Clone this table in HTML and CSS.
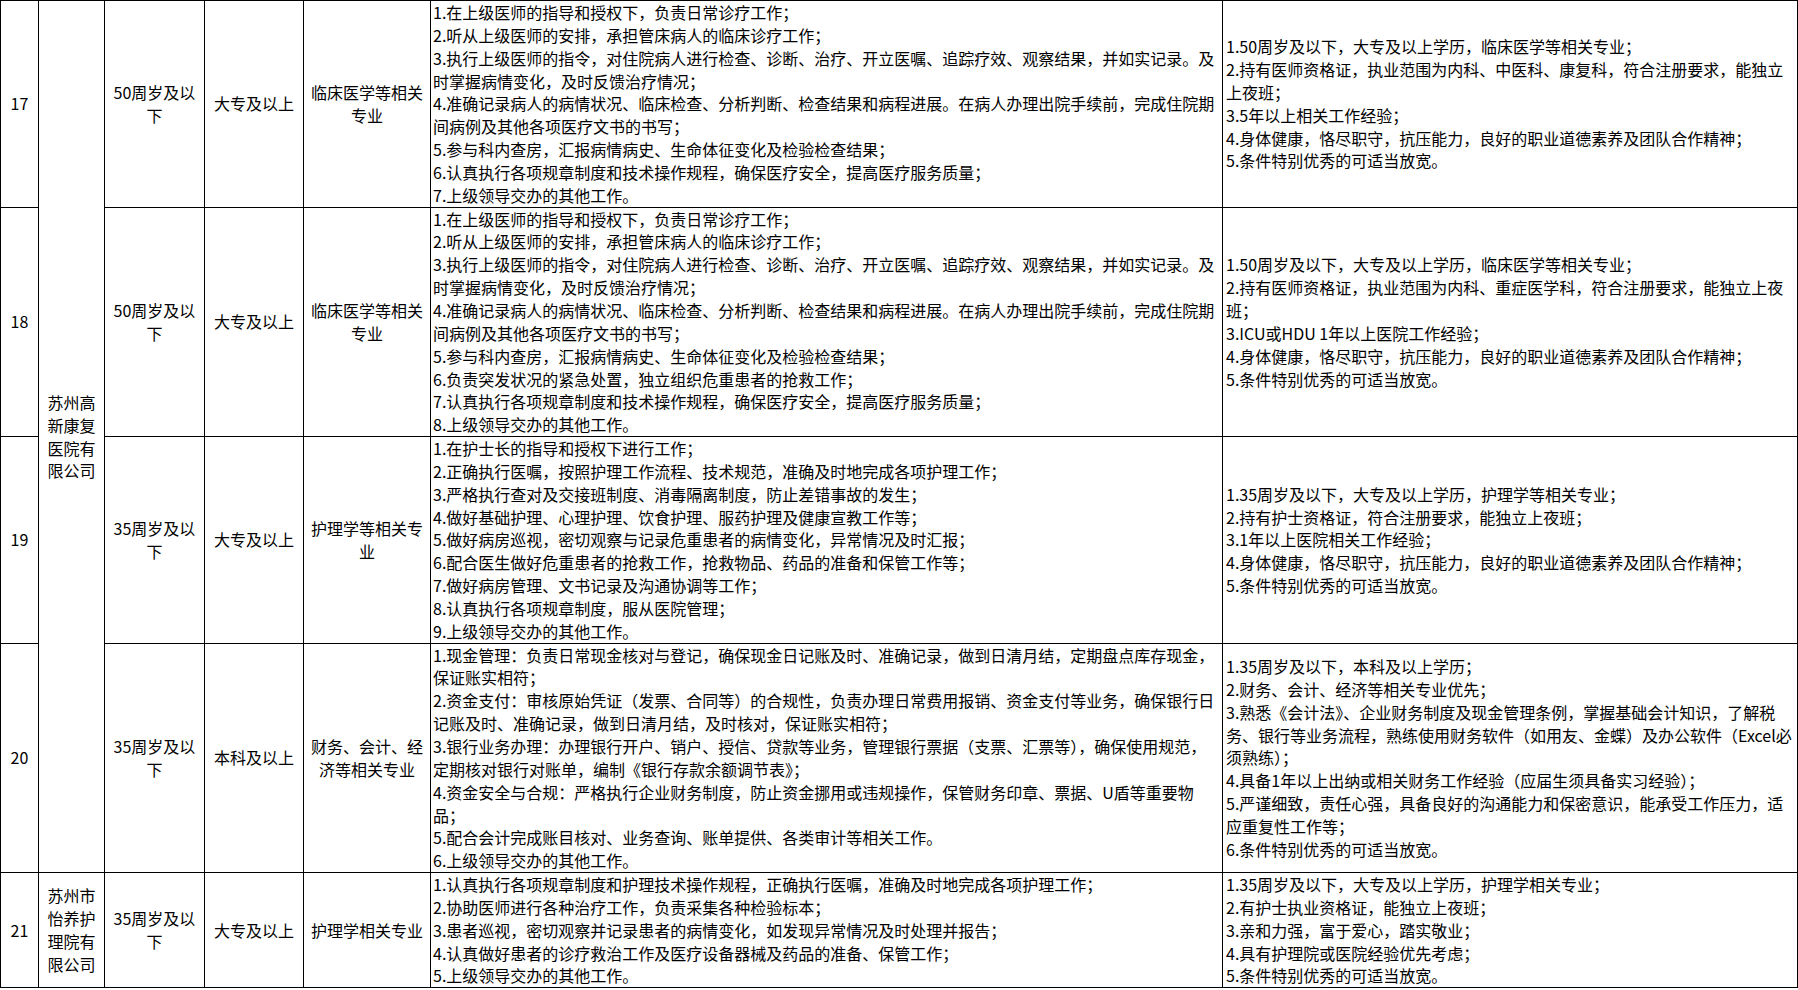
FILE: index.html
```html
<!DOCTYPE html>
<html lang="zh-CN">
<head>
<meta charset="utf-8">
<title>招聘岗位</title>
<link rel="stylesheet" href="styles.css">
</head>
<body>
<table class="jobs">
  <colgroup>
    <col class="c-no"><col class="c-co"><col class="c-age"><col class="c-edu"><col class="c-major"><col class="c-duty"><col class="c-req">
  </colgroup>
  <tbody>
    <tr>
      <td class="no">17</td>
      <td class="co" rowspan="4">苏州高新康复医院有限公司</td>
      <td class="mid">50周岁及以下</td>
      <td class="mid">大专及以上</td>
      <td class="mid">临床医学等相关专业</td>
      <td class="duty">
        <p>1.在上级医师的指导和授权下，负责日常诊疗工作；</p>
        <p>2.听从上级医师的安排，承担管床病人的临床诊疗工作；</p>
        <p>3.执行上级医师的指令，对住院病人进行检查、诊断、治疗、开立医嘱、追踪疗效、观察结果，并如实记录。及时掌握病情变化，及时反馈治疗情况；</p>
        <p>4.准确记录病人的病情状况、临床检查、分析判断、检查结果和病程进展。在病人办理出院手续前，完成住院期间病例及其他各项医疗文书的书写；</p>
        <p>5.参与科内查房，汇报病情病史、生命体征变化及检验检查结果；</p>
        <p>6.认真执行各项规章制度和技术操作规程，确保医疗安全，提高医疗服务质量；</p>
        <p>7.上级领导交办的其他工作。</p>
      </td>
      <td class="req">
        <p>1.50周岁及以下，大专及以上学历，临床医学等相关专业；</p>
        <p>2.持有医师资格证，执业范围为内科、中医科、康复科，符合注册要求，能独立上夜班；</p>
        <p>3.5年以上相关工作经验；</p>
        <p>4.身体健康，恪尽职守，抗压能力，良好的职业道德素养及团队合作精神；</p>
        <p>5.条件特别优秀的可适当放宽。</p>
      </td>
    </tr>
    <tr>
      <td class="no">18</td>
      <td class="mid">50周岁及以下</td>
      <td class="mid">大专及以上</td>
      <td class="mid">临床医学等相关专业</td>
      <td class="duty">
        <p>1.在上级医师的指导和授权下，负责日常诊疗工作；</p>
        <p>2.听从上级医师的安排，承担管床病人的临床诊疗工作；</p>
        <p>3.执行上级医师的指令，对住院病人进行检查、诊断、治疗、开立医嘱、追踪疗效、观察结果，并如实记录。及时掌握病情变化，及时反馈治疗情况；</p>
        <p>4.准确记录病人的病情状况、临床检查、分析判断、检查结果和病程进展。在病人办理出院手续前，完成住院期间病例及其他各项医疗文书的书写；</p>
        <p>5.参与科内查房，汇报病情病史、生命体征变化及检验检查结果；</p>
        <p>6.负责突发状况的紧急处置，独立组织危重患者的抢救工作；</p>
        <p>7.认真执行各项规章制度和技术操作规程，确保医疗安全，提高医疗服务质量；</p>
        <p>8.上级领导交办的其他工作。</p>
      </td>
      <td class="req">
        <p>1.50周岁及以下，大专及以上学历，临床医学等相关专业；</p>
        <p>2.持有医师资格证，执业范围为内科、重症医学科，符合注册要求，能独立上夜班；</p>
        <p>3.ICU或HDU 1年以上医院工作经验；</p>
        <p>4.身体健康，恪尽职守，抗压能力，良好的职业道德素养及团队合作精神；</p>
        <p>5.条件特别优秀的可适当放宽。</p>
      </td>
    </tr>
    <tr>
      <td class="no">19</td>
      <td class="mid">35周岁及以下</td>
      <td class="mid">大专及以上</td>
      <td class="mid">护理学等相关专业</td>
      <td class="duty">
        <p>1.在护士长的指导和授权下进行工作；</p>
        <p>2.正确执行医嘱，按照护理工作流程、技术规范，准确及时地完成各项护理工作；</p>
        <p>3.严格执行查对及交接班制度、消毒隔离制度，防止差错事故的发生；</p>
        <p>4.做好基础护理、心理护理、饮食护理、服药护理及健康宣教工作等；</p>
        <p>5.做好病房巡视，密切观察与记录危重患者的病情变化，异常情况及时汇报；</p>
        <p>6.配合医生做好危重患者的抢救工作，抢救物品、药品的准备和保管工作等；</p>
        <p>7.做好病房管理、文书记录及沟通协调等工作；</p>
        <p>8.认真执行各项规章制度，服从医院管理；</p>
        <p>9.上级领导交办的其他工作。</p>
      </td>
      <td class="req">
        <p>1.35周岁及以下，大专及以上学历，护理学等相关专业；</p>
        <p>2.持有护士资格证，符合注册要求，能独立上夜班；</p>
        <p>3.1年以上医院相关工作经验；</p>
        <p>4.身体健康，恪尽职守，抗压能力，良好的职业道德素养及团队合作精神；</p>
        <p>5.条件特别优秀的可适当放宽。</p>
      </td>
    </tr>
    <tr>
      <td class="no">20</td>
      <td class="mid">35周岁及以下</td>
      <td class="mid">本科及以上</td>
      <td class="mid">财务、会计、经济等相关专业</td>
      <td class="duty">
        <p>1.现金管理：负责日常现金核对与登记，确保现金日记账及时、准确记录，做到日清月结，定期盘点库存现金，保证账实相符；</p>
        <p>2.资金支付：审核原始凭证（发票、合同等）的合规性，负责办理日常费用报销、资金支付等业务，确保银行日记账及时、准确记录，做到日清月结，及时核对，保证账实相符；</p>
        <p>3.银行业务办理：办理银行开户、销户、授信、贷款等业务，管理银行票据（支票、汇票等），确保使用规范，定期核对银行对账单，编制《银行存款余额调节表》；</p>
        <p>4.资金安全与合规：严格执行企业财务制度，防止资金挪用或违规操作，保管财务印章、票据、U盾等重要物品；</p>
        <p>5.配合会计完成账目核对、业务查询、账单提供、各类审计等相关工作。</p>
        <p>6.上级领导交办的其他工作。</p>
      </td>
      <td class="req">
        <p>1.35周岁及以下，本科及以上学历；</p>
        <p>2.财务、会计、经济等相关专业优先；</p>
        <p>3.熟悉《会计法》、企业财务制度及现金管理条例，掌握基础会计知识，了解税务、银行等业务流程，熟练使用财务软件（如用友、金蝶）及办公软件（Excel必须熟练）；</p>
        <p>4.具备1年以上出纳或相关财务工作经验（应届生须具备实习经验）；</p>
        <p>5.严谨细致，责任心强，具备良好的沟通能力和保密意识，能承受工作压力，适应重复性工作等；</p>
        <p>6.条件特别优秀的可适当放宽。</p>
      </td>
    </tr>
    <tr>
      <td class="no">21</td>
      <td class="co">苏州市怡养护理院有限公司</td>
      <td class="mid">35周岁及以下</td>
      <td class="mid">大专及以上</td>
      <td class="mid">护理学相关专业</td>
      <td class="duty">
        <p>1.认真执行各项规章制度和护理技术操作规程，正确执行医嘱，准确及时地完成各项护理工作；</p>
        <p>2.协助医师进行各种治疗工作，负责采集各种检验标本；</p>
        <p>3.患者巡视，密切观察并记录患者的病情变化，如发现异常情况及时处理并报告；</p>
        <p>4.认真做好患者的诊疗救治工作及医疗设备器械及药品的准备、保管工作；</p>
        <p>5.上级领导交办的其他工作。</p>
      </td>
      <td class="req">
        <p>1.35周岁及以下，大专及以上学历，护理学相关专业；</p>
        <p>2.有护士执业资格证，能独立上夜班；</p>
        <p>3.亲和力强，富于爱心，踏实敬业；</p>
        <p>4.具有护理院或医院经验优先考虑；</p>
        <p>5.条件特别优秀的可适当放宽。</p>
      </td>
    </tr>
  </tbody>
</table>
</body>
</html>
```

FILE: styles.css
```css
html, body {
  margin: 0;
  padding: 0;
  background: #fff;
}

body {
  font-family: "Noto Sans CJK SC", "Microsoft YaHei", sans-serif;
  font-size: 16px;
  color: #000;
}

.jobs {
  border-collapse: collapse;
  table-layout: fixed;
  width: 1797px;
}

.c-no { width: 38px; }
.c-co { width: 66px; }
.c-age { width: 100px; }
.c-edu { width: 99px; }
.c-major { width: 127px; }
.c-duty { width: 792px; }
.c-req { width: 575px; }

.jobs td {
  border: 1px solid #000;
  padding: 0;
  line-height: 22.85px;
  vertical-align: middle;
  text-align: left;
}

.jobs p {
  margin: 0;
}

.jobs .no {
  text-align: center;
}

.jobs .co {
  text-align: center;
  padding: 0 2px;
}

.jobs .mid {
  text-align: center;
  padding: 0 4px;
}

.jobs .duty {
  padding: 0 4px 0 2px;
}

.jobs .req {
  padding: 0 3px;
}
```
